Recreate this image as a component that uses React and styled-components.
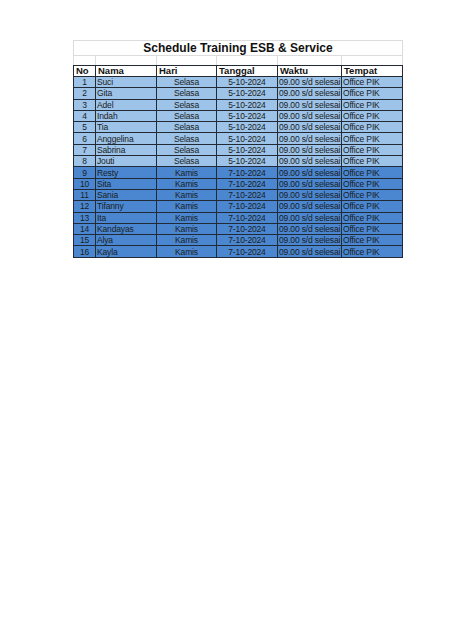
import React from 'react';
import styled, { createGlobalStyle } from 'styled-components';

const GlobalStyle = createGlobalStyle`
  html, body {
    margin: 0;
    padding: 0;
    background: #ffffff;
  }
  body {
    font-family: "Liberation Sans", Arial, sans-serif;
    color: #1a1d24;
  }
`;

const Page = styled.div`
  width: 474px;
  height: 632px;
  padding: 40px 0 0 73px;
  box-sizing: border-box;
`;

const Sheet = styled.table`
  border-collapse: collapse;
  table-layout: fixed;
  width: 329px;
`;

const TitleCell = styled.td`
  height: 14px;
  padding: 0;
  border: 1px solid #dcdcdc;
  text-align: center;
  font-size: 12px;
  font-weight: bold;
  line-height: 14px;
  color: #111111;
`;

const BlankCell = styled.td`
  height: 9px;
  padding: 0;
  border: 1px solid #dcdcdc;
  border-bottom: 1px solid #222a36;
`;

const HeadCell = styled.th`
  height: 10px;
  padding: 0 0 0 2px;
  border: 1px solid #222a36;
  text-align: left;
  font-size: 9.5px;
  font-weight: bold;
  line-height: 10px;
  background: #ffffff;
  color: #111111;
`;

const Row = styled.tr`
  background: ${(p) => (p.$dark ? '#4a87d0' : '#9dc3e8')};
`;

const Cell = styled.td`
  height: 10.3px;
  padding: 0 0 0 ${(p) => (p.$align === 'center' ? '0' : '1px')};
  border: 1px solid #222a36;
  text-align: ${(p) => p.$align || 'left'};
  font-size: 8.5px;
  letter-spacing: -0.15px;
  line-height: 10px;
  white-space: nowrap;
  overflow: hidden;
`;

const widths = [22, 61, 60, 61, 64, 61];

const names = [
  'Suci', 'Gita', 'Adel', 'Indah', 'Tia', 'Anggelina', 'Sabrina', 'Jouti',
  'Resty', 'Sita', 'Sania', 'Tifanny', 'Ita', 'Kandayas', 'Alya', 'Kayla',
];

export default function App() {
  return (
    <>
      <GlobalStyle />
      <Page>
        <Sheet>
          <colgroup>
            {widths.map((w, i) => <col key={i} style={{ width: w }} />)}
          </colgroup>
          <tbody>
            <tr>
              <TitleCell colSpan={6}>Schedule Training ESB &amp; Service</TitleCell>
            </tr>
            <tr>
              {widths.map((w, i) => <BlankCell key={i} />)}
            </tr>
            <tr>
              <HeadCell>No</HeadCell>
              <HeadCell>Nama</HeadCell>
              <HeadCell>Hari</HeadCell>
              <HeadCell>Tanggal</HeadCell>
              <HeadCell>Waktu</HeadCell>
              <HeadCell>Tempat</HeadCell>
            </tr>
            {names.map((name, i) => {
              const second = i >= 8;
              return (
                <Row key={name} $dark={second}>
                  <Cell $align="center">{i + 1}</Cell>
                  <Cell>{name}</Cell>
                  <Cell $align="center">{second ? 'Kamis' : 'Selasa'}</Cell>
                  <Cell $align="center">{second ? '7-10-2024' : '5-10-2024'}</Cell>
                  <Cell>09.00 s/d selesai</Cell>
                  <Cell>Office PIK</Cell>
                </Row>
              );
            })}
          </tbody>
        </Sheet>
      </Page>
    </>
  );
}
